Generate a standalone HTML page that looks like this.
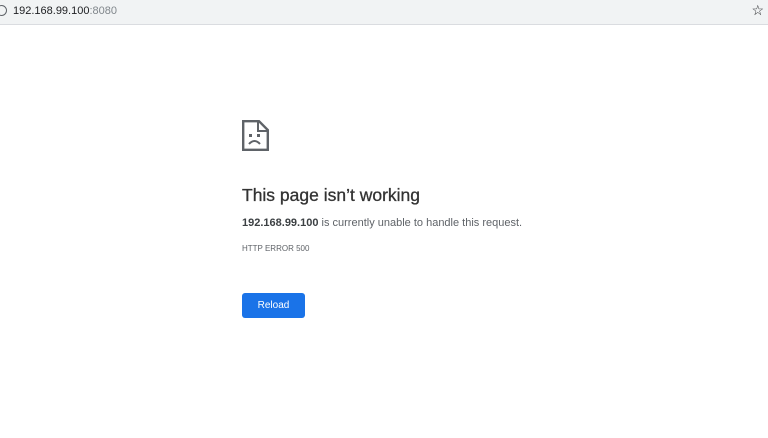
<!DOCTYPE html>
<html><head><style>
body{margin:0;width:768px;height:438px;background:#fff;font-family:"Liberation Sans",sans-serif;position:relative;overflow:hidden}
.bar{position:absolute;left:0;top:0;width:768px;height:24px;background:#f1f3f4;border-bottom:1px solid #dadce0}
.url{position:absolute;left:13px;top:5px;font-size:11px;color:#202124}
.url span{color:#80868b}
.info{position:absolute;left:-4px;top:5px;width:9px;height:9px;border:1px solid #5f6368;border-radius:50%}
.star{position:absolute;right:4px;top:2px;font-size:14px;color:#202124}
h1{position:absolute;left:242px;top:185px;margin:0;font-size:17.5px;font-weight:normal;color:#333;-webkit-text-stroke:0.3px #333}
.p{position:absolute;left:242px;top:217px;font-size:11px;color:#5f6368}
.p b{color:#3c4043}
.e{position:absolute;left:242px;top:244px;font-size:8px;color:#5f6368}
.btn{position:absolute;left:242px;top:293px;width:63px;height:25px;background:#1a73e8;border-radius:3px;color:#fff;font-size:10px;text-align:center;line-height:25px}
</style></head><body>
<div class="bar"><div class="info"></div><div class="url">192.168.99.100<span>:8080</span></div><div class="star">☆</div></div>
<svg style="position:absolute;left:242px;top:120px" width="27" height="31" viewBox="0 0 27 31" fill="none" stroke="#5f6368" stroke-width="2.4">
<path d="M1.2 1.2H17L25.8 10V29.8H1.2Z"/><path d="M16 1.2V11H25.8" stroke-width="2"/>
<rect x="7" y="14" width="3" height="3" fill="#5f6368" stroke="none"/><rect x="15" y="14" width="3" height="3" fill="#5f6368" stroke="none"/>
<path d="M7 24Q12.5 18 18 24" stroke-width="2"/></svg>
<h1>This page isn’t working</h1>
<div class="p"><b>192.168.99.100</b> is currently unable to handle this request.</div>
<div class="e">HTTP ERROR 500</div>
<div class="btn">Reload</div>
</body></html>
